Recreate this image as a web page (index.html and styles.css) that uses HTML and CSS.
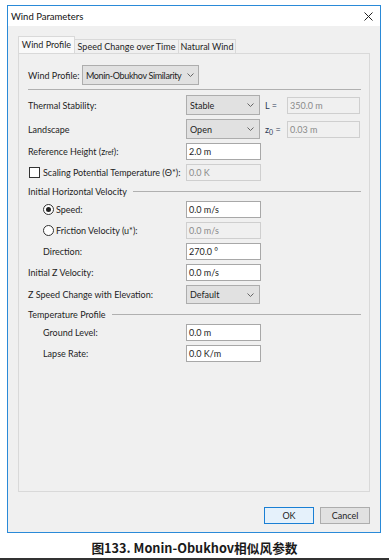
FILE: index.html
```html
<!DOCTYPE html>
<html>
<head>
<meta charset="utf-8">
<link rel="stylesheet" href="styles.css">
</head>
<body>
<div class="page">
  <div class="window">
    <div class="titlebar">
      <span class="title">Wind Parameters</span>
      <svg class="close" width="9" height="9" viewBox="0 0 9 9"><path d="M0.5 0.5 L8.5 8.5 M8.5 0.5 L0.5 8.5" stroke="#222" stroke-width="1" fill="none"/></svg>
    </div>
    <div class="content">
      <div class="tabs">
        <div class="tab active w1">Wind Profile</div>
        <div class="tab w2">Speed Change over Time</div>
        <div class="tab w3">Natural Wind</div>
      </div>
      <div class="panel">
        <div class="row h20">
          <span class="plbl">Wind Profile:</span>
          <div class="sel wide"><span class="opt">Monin-Obukhov Similarity</span><svg width="7" height="4" viewBox="0 0 7 4"><polyline points="0.5,0.5 3.5,3.5 6.5,0.5" fill="none" stroke="#666"/></svg></div>
        </div>
        <div class="sep"></div>
        <div class="row h20">
          <span class="lbl">Thermal Stability:</span>
          <div class="sel"><span class="opt">Stable</span><svg width="7" height="4" viewBox="0 0 7 4"><polyline points="0.5,0.5 3.5,3.5 6.5,0.5" fill="none" stroke="#666"/></svg></div>
          <span class="eq">L =</span>
          <div class="inp dis side">350.0 m</div>
        </div>
        <div class="row h20">
          <span class="lbl">Landscape</span>
          <div class="sel"><span class="opt">Open</span><svg width="7" height="4" viewBox="0 0 7 4"><polyline points="0.5,0.5 3.5,3.5 6.5,0.5" fill="none" stroke="#666"/></svg></div>
          <span class="eq">z<sub>0</sub> =</span>
          <div class="inp dis side">0.03 m</div>
        </div>
        <div class="row">
          <span class="lbl">Reference Height (z<sub>ref</sub>):</span>
          <div class="inp">2.0 m</div>
        </div>
        <div class="row">
          <span class="lbl chk"><span class="box"></span>Scaling Potential Temperature (Θ*):</span>
          <div class="inp dis">0.0 K</div>
        </div>
        <div class="grp"><span>Initial Horizontal Velocity</span><span class="line"></span></div>
        <div class="row">
          <span class="lbl ind rad"><span class="radio on"></span>Speed:</span>
          <div class="inp">0.0 m/s</div>
        </div>
        <div class="row">
          <span class="lbl ind rad"><span class="radio"></span>Friction Velocity (u*):</span>
          <div class="inp dis">0.0 m/s</div>
        </div>
        <div class="row">
          <span class="lbl ind">Direction:</span>
          <div class="inp">270.0 °</div>
        </div>
        <div class="row">
          <span class="lbl">Initial Z Velocity:</span>
          <div class="inp">0.0 m/s</div>
        </div>
        <div class="row h19">
          <span class="lbl">Z Speed Change with Elevation:</span>
          <div class="sel"><span class="opt">Default</span><svg width="7" height="4" viewBox="0 0 7 4"><polyline points="0.5,0.5 3.5,3.5 6.5,0.5" fill="none" stroke="#666"/></svg></div>
        </div>
        <div class="grp"><span>Temperature Profile</span><span class="line"></span></div>
        <div class="row">
          <span class="lbl ind">Ground Level:</span>
          <div class="inp">0.0 m</div>
        </div>
        <div class="row">
          <span class="lbl ind">Lapse Rate:</span>
          <div class="inp">0.0 K/m</div>
        </div>
      </div>
      <div class="btns">
        <div class="btn ok">OK</div>
        <div class="btn">Cancel</div>
      </div>
    </div>
  </div>
  <div class="caption">图133. Monin-Obukhov相似风参数</div>
  <div class="bottombar"></div>
</div>
</body>
</html>
```
FILE: styles.css
```css
* { box-sizing: border-box; margin: 0; padding: 0; }
html, body { width: 389px; height: 560px; background: #fff; overflow: hidden; }
body { font-family: Lato, "Liberation Sans", sans-serif; font-size: 9px; color: #1e1e1e; }
.page { display: flex; flex-direction: column; height: 560px; }
.window { margin: 5px 0 0 7px; width: 374px; height: 528px; border: 1px solid #2a8ad8; background: #f0f0f0; display: flex; flex-direction: column; }
.titlebar { height: 20px; background: #fff; display: flex; align-items: center; justify-content: space-between; padding: 0 7px 0 3px; flex: none; }
.title { font-size: 9.5px; color: #111; }
.close { display: block; }
.content { padding: 10px 10px 8px 10px; display: flex; flex-direction: column; }
.tabs { display: flex; height: 17px; align-items: flex-end; }
.tab { height: 14px; border: 1px solid #d9d9d9; border-bottom: none; display: flex; align-items: center; justify-content: center; white-space: nowrap; background: #f0f0f0; }
.tab + .tab { margin-left: -1px; }
.tab.active { height: 17px; background: #f9f9f9; padding-bottom: 1px; position: relative; z-index: 1; }
.w1 { width: 57px; }
.w2 { width: 105px; }
.w3 { width: 58px; }
.panel { height: 439px; border: 1px solid #d9d9d9; padding: 11px 8px 0 9px; display: flex; flex-direction: column; gap: 4px; }
.row { display: flex; align-items: center; height: 17px; flex: none; }
.row.h20 { height: 20px; }
.row.h19 { height: 19px; }
.plbl { width: 54px; flex: none; white-space: nowrap; }
.lbl { width: 158px; flex: none; white-space: nowrap; display: flex; align-items: center; }
.lbl.ind { padding-left: 15px; }
sub { font-size: 7px; vertical-align: -2px; line-height: 0; }
.sel { width: 74px; height: 100%; background: #e1e1e1; border: 1px solid #adadad; display: flex; align-items: center; padding: 0 5px 0 3px; flex: none; white-space: nowrap; }
.sel .opt { flex: 1; min-width: 0; overflow: hidden; }
.sel svg { flex: none; margin-left: 2px; }
.sel.wide { width: 117px; padding-right: 4px; }
.sel.wide .opt { letter-spacing: -0.35px; }
.eq { width: 27px; padding-left: 5px; color: #2c3a55; flex: none; white-space: nowrap; }
.inp { width: 75px; height: 17px; background: #fff; border: 1px solid #a8a8a8; padding-left: 2px; display: flex; align-items: center; flex: none; white-space: nowrap; }
.inp.side { width: 73px; height: 17px; }
.inp.dis { background: #f0f0f0; border-color: #cfcfcf; color: #8a8a8a; }
.sep { height: 2px; border-top: 1px solid #b0b0b0; flex: none; }
.box { width: 11px; height: 11px; border: 1px solid #333; background: #fff; margin: 0 3px 0 1px; flex: none; }
.radio { width: 11px; height: 11px; border: 1px solid #333; border-radius: 50%; background: #fff; margin-right: 2px; flex: none; display: flex; align-items: center; justify-content: center; }
.radio.on::after { content: ""; width: 5px; height: 5px; border-radius: 50%; background: #222; }
.grp { height: 12px; display: flex; align-items: center; flex: none; }
.grp .line { flex: 1; height: 1px; background: #b0b0b0; margin-left: 6px; }
.btns { display: flex; justify-content: flex-end; gap: 6px; margin-top: 15px; }
.btn { width: 50px; height: 17px; border: 1px solid #adadad; background: #e1e1e1; display: flex; align-items: center; justify-content: center; }
.btn.ok { border-color: #1a7fd4; background: #e5f1fb; }
.caption { margin-top: 7px; height: 16px; line-height: 16px; text-align: center; font-family: "Noto Sans CJK SC", "Noto Sans", sans-serif; font-weight: bold; font-size: 12.7px; color: #1a1a1a; }
.bottombar { margin-top: auto; height: 2px; background: #333; }
```
